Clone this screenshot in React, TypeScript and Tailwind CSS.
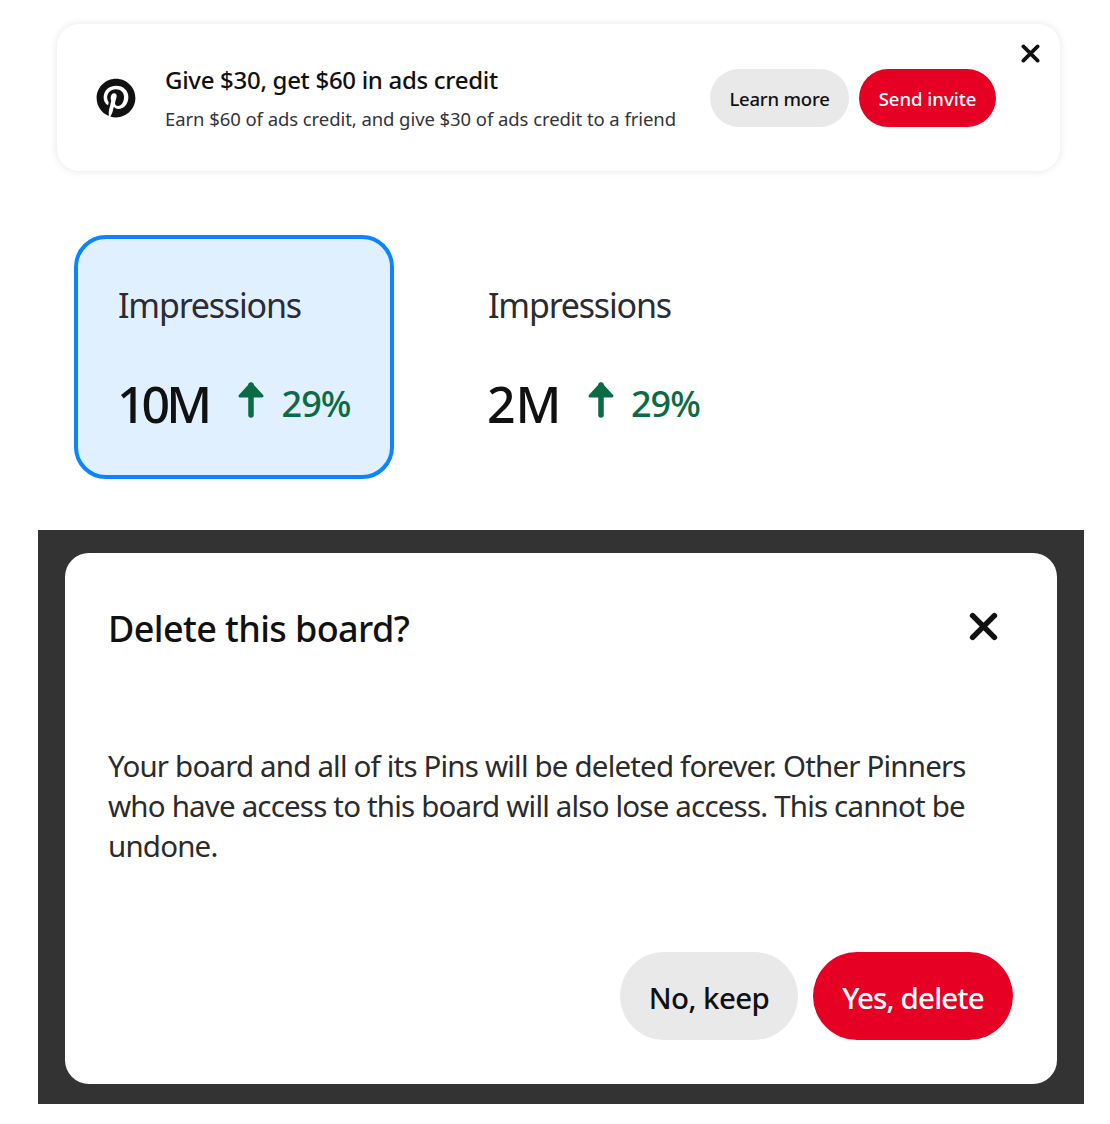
import React from "react";
import { FaPinterest } from "react-icons/fa";

const CloseIcon = ({ className }: { className: string }) => (
  <svg viewBox="0 0 24 24" className={className} fill="none" stroke="currentColor" strokeWidth="4.6" strokeLinecap="round">
    <path d="M3 3l18 18M21 3L3 21" />
  </svg>
);

const ArrowUp = () => (
  <svg viewBox="0 0 28 38" className="mt-[-11px] h-[38px] w-[28px] text-[#0a6b45]" fill="none" stroke="currentColor" strokeLinecap="round" strokeLinejoin="round">
    <path d="M14 5v30" strokeWidth="5.5" />
    <path d="M3 16L14 4l11 12z" fill="currentColor" strokeWidth="3" />
  </svg>
);

const Stat = ({ value, selected }: { value: string; selected?: boolean }) => (
  <div
    className={
      selected
        ? "flex h-[244px] w-[320px] flex-col rounded-[32px] border-[4px] border-[#0a84ff] bg-[#e0f0ff] pl-[40px] pt-[44px]"
        : "flex h-[244px] w-[320px] flex-col pl-[43px] pt-[48px]"
    }
  >
    <div className="text-[34px] leading-[44px] tracking-[-1.2px] text-[#2b2b35]">Impressions</div>
    <div className="mt-[47px] flex items-center">
      <span
        className={
          selected
            ? "ml-[-1px] text-[50px] font-medium leading-[60px] tracking-[-4px] text-[#111111]"
            : "ml-[-1px] text-[50px] font-medium leading-[60px] tracking-[0px] text-[#111111]"
        }
      >
        {value}
      </span>
      <span className={selected ? "ml-[29px] flex items-center" : "ml-[25px] flex items-center"}>
        <ArrowUp />
        <span className="ml-[16.5px] text-[36px] font-medium leading-[44px] tracking-[-1px] text-[#0a6b45]">29%</span>
      </span>
    </div>
  </div>
);

export default function App() {
  return (
    <div className="h-[1124px] w-[1110px] overflow-hidden bg-white pt-[24px] font-['Noto_Sans','Open_Sans',sans-serif]">
      <div className="relative ml-[57px] flex h-[147px] w-[1003px] items-center rounded-[22px] bg-white pl-[39px] shadow-[0_0_8px_rgba(0,0,0,0.1)]">
        <FaPinterest className="h-[40px] w-[40px] text-[#111111]" />
        <div className="ml-[29px] w-[545px] pt-[1px]">
          <div className="text-[24px] font-medium leading-[30px] tracking-[-0.3px] text-[#111111]">Give $30, get $60 in ads credit</div>
          <div className="mt-[12px] text-[18.5px] leading-[24px] tracking-[-0.07px] text-[#33333a]">
            Earn $60 of ads credit, and give $30 of ads credit to a friend
          </div>
        </div>
        <button className="mt-[1px] h-[58px] w-[139px] rounded-full bg-[#e9e9e9] pt-[2px] text-[18.5px] font-medium tracking-[-0.2px] text-[#111111]">Learn more</button>
        <button className="ml-[10px] mt-[1px] h-[58px] w-[137px] rounded-full bg-[#e60023] pt-[2px] text-[18.5px] font-medium tracking-[0px] text-white">Send invite</button>
        <CloseIcon className="absolute right-[20px] top-[20px] h-[19px] w-[19px] text-[#111111]" />
      </div>

      <div className="ml-[74px] mt-[64px] flex gap-[51px]">
        <Stat value="10M" selected />
        <Stat value="2M" />
      </div>

      <div className="ml-[38px] mt-[51px] h-[574px] w-[1046px] bg-[#333333] pl-[27px] pt-[23px]">
        <div className="flex h-[531px] w-[992px] flex-col rounded-[24px] bg-white pl-[43px] pr-[44px]">
          <div className="flex items-center justify-between pr-[15px] pt-[52px]">
            <div className="text-[36px] font-medium leading-[48px] tracking-[-0.6px] text-[#111111]">Delete this board?</div>
            <CloseIcon className="mt-[-6px] h-[29px] w-[29px] text-[#111111]" />
          </div>
          <p className="mt-[93px] text-[29.5px] leading-[40px] tracking-[-0.82px] text-[#2b2b2b]">
            Your board and all of its Pins will be deleted forever. Other Pinners who have access to this board will also lose access. This cannot be undone.
          </p>
          <div className="mt-[86px] flex justify-end gap-[15px]">
            <button className="h-[88px] w-[178px] rounded-full bg-[#e9e9e9] pt-[4px] text-[29.5px] font-medium tracking-[-0.6px] text-[#111111]">No, keep</button>
            <button className="h-[88px] w-[200px] rounded-full bg-[#e60023] pt-[4px] text-[29.5px] font-medium tracking-[-0.85px] text-white">Yes, delete</button>
          </div>
        </div>
      </div>
    </div>
  );
}
